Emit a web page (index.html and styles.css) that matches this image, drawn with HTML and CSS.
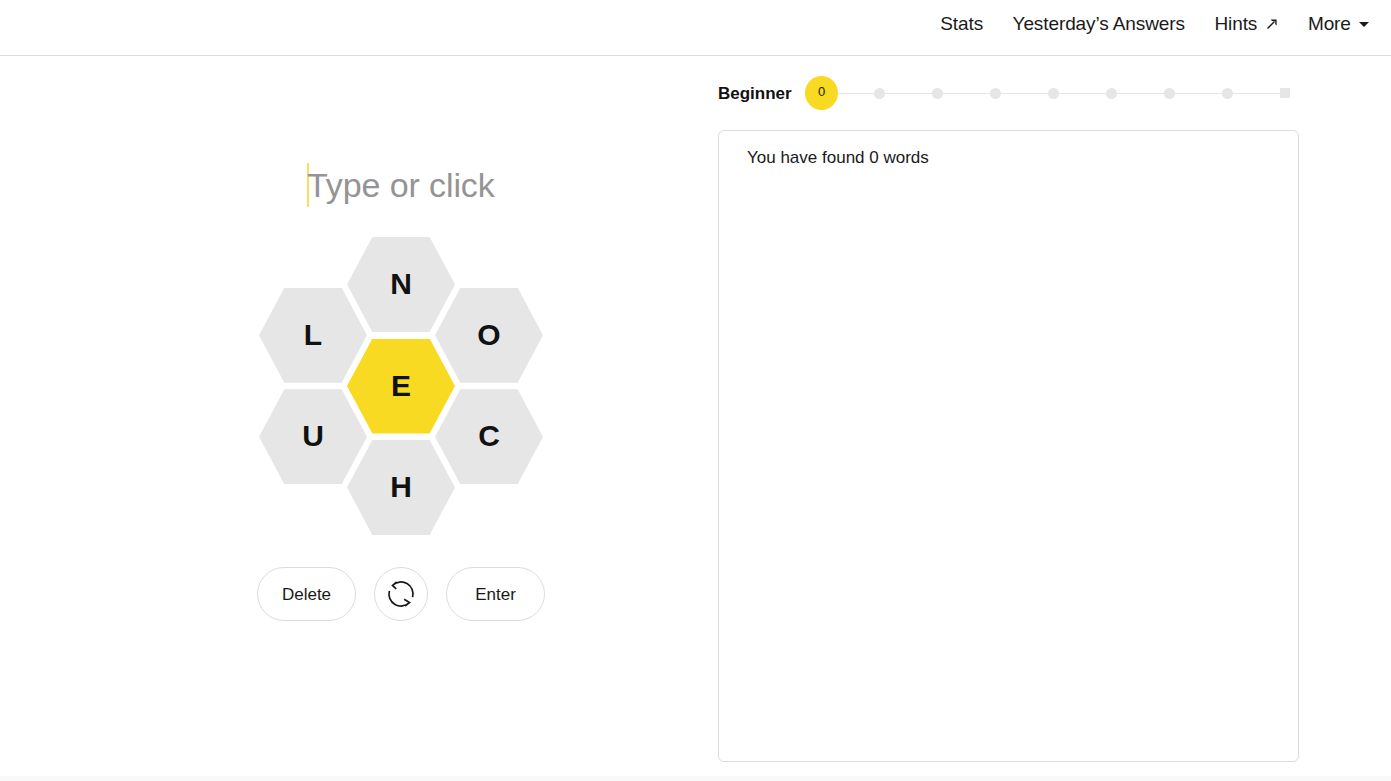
FILE: index.html
```html
<!DOCTYPE html>
<html lang="en">
<head>
    <meta charset="UTF-8">
    <meta name="viewport" content="width=device-width, initial-scale=1.0">
    <title>Spelling Bee</title>
    <link rel="stylesheet" href="styles.css">
</head>
<body>

<nav class="topbar">
    <a class="nav-link" href="#">Stats</a>
    <a class="nav-link" href="#">Yesterday’s Answers</a>
    <a class="nav-link" href="#">Hints <svg class="nav-arrow" viewBox="0 0 12 12" width="12" height="12"><path d="M1.5 10.5 8.5 3.5" fill="none" stroke="#1a1a1a" stroke-width="1.3"/><path d="M4.6 1.6H10.6V7.6L9.2 6.2V3H6Z" fill="#1a1a1a"/></svg></a>
    <a class="nav-link" href="#">More <span class="caret"></span></a>
</nav>

<main class="container">
    <section class="game">
        <div class="word-input"><span class="cursor"></span>Type or click</div>

        <div class="hive">
            <div class="hive-col">
                <div class="cell">L</div>
                <div class="cell">U</div>
            </div>
            <div class="hive-col">
                <div class="cell">N</div>
                <div class="cell center">E</div>
                <div class="cell">H</div>
            </div>
            <div class="hive-col">
                <div class="cell">O</div>
                <div class="cell">C</div>
            </div>
        </div>

        <div class="controls">
            <button class="btn">Delete</button>
            <button class="btn btn-round" aria-label="Shuffle">
                <svg class="shuffle" viewBox="0 0 26 26" width="26" height="26">
                    <path d="M4.5 4.5A12 12 0 0 1 24.6 16.1M8.7 1 4.5 4.5 8.2 7.8"/>
                    <path d="M1.4 9.9A12 12 0 0 0 21.5 21.5M16.2 18.2 21.5 21.5 17 25"/>
                </svg>
            </button>
            <button class="btn">Enter</button>
        </div>
    </section>

    <section class="results">
        <div class="progress">
            <span class="rank">Beginner</span>
            <div class="track">
                <span class="score">0</span>
                <span class="dot"></span>
                <span class="dot"></span>
                <span class="dot"></span>
                <span class="dot"></span>
                <span class="dot"></span>
                <span class="dot"></span>
                <span class="dot"></span>
                <span class="dot last"></span>
            </div>
        </div>
        <div class="word-list">You have found 0 words</div>
    </section>
</main>

</body>
</html>
```

FILE: styles.css
```css
body {
    font-family: "Liberation Sans", Arial, sans-serif;
    background-color: #f9f9f9;
    color: #1a1a1a;
    margin: 0;
}
.topbar {
    box-sizing: border-box;
    height: 56px;
    padding: 0 22px 7px 0;
    background: white;
    border-bottom: 1px solid #dcdcdc;
    display: flex;
    justify-content: flex-end;
    align-items: center;
    gap: 29.5px;
    font-size: 19px;
    letter-spacing: -0.1px;
}
.nav-link {
    color: #1a1a1a;
    text-decoration: none;
}
.nav-arrow {
    margin-left: 4px;
}
.caret {
    display: inline-block;
    vertical-align: 3px;
    margin-left: 3px;
    border-top: 5px solid #1a1a1a;
    border-left: 5px solid transparent;
    border-right: 5px solid transparent;
}
.container {
    height: 700px;
    padding: 20px 92px 0 93px;
    background: white;
    display: grid;
    grid-template-columns: 616px 581px;
    column-gap: 9px;
}
.game {
    display: flex;
    flex-direction: column;
    align-items: center;
}
.word-input {
    margin-top: 87px;
    height: 44px;
    line-height: 44px;
    width: 188px;
    font-size: 34px;
    letter-spacing: -0.1px;
    color: #949494;
    white-space: nowrap;
    display: flex;
}
.cursor {
    flex-shrink: 0;
    width: 2px;
    height: 44px;
    margin-right: -2px;
    background: #f8df5c;
}
.hive {
    margin-top: 30px;
    display: flex;
    align-items: center;
}
.hive-col {
    display: flex;
    flex-direction: column;
    gap: 6.5px;
    margin: 0 -10px;
}
.cell {
    box-sizing: border-box;
    width: 108px;
    height: 95px;
    padding-bottom: 1px;
    background: #e6e6e6;
    clip-path: polygon(23.5% 0, 76.5% 0, 100% 50%, 76.5% 100%, 23.5% 100%, 0 50%);
    display: flex;
    align-items: center;
    justify-content: center;
    font-size: 30px;
    font-weight: bold;
    color: #111;
}
.center {
    background: #f7da21;
}
.controls {
    margin-top: 32px;
    display: flex;
    gap: 18px;
}
.btn {
    width: 99px;
    height: 54px;
    background: white;
    border: 1px solid #dcdcdc;
    border-radius: 27px;
    font-family: inherit;
    font-size: 17px;
    color: #1a1a1a;
    padding: 1px 0 0;
    cursor: pointer;
}
.btn-round {
    width: 54px;
    padding: 0;
    display: flex;
    align-items: center;
    justify-content: center;
}
.shuffle {
    overflow: visible;
    fill: none;
    stroke: #1a1a1a;
    stroke-width: 1.7;
}
.progress {
    height: 34px;
    display: flex;
    align-items: center;
}
.rank {
    width: 87px;
    padding-top: 2px;
    font-size: 17px;
    font-weight: bold;
    color: #111;
}
.track {
    position: relative;
    display: flex;
    align-items: center;
    gap: 47px;
}
.track::before {
    content: "";
    position: absolute;
    left: 16px;
    right: 5px;
    top: 17px;
    height: 1px;
    background: #e6e6e6;
}
.score {
    position: relative;
    width: 33px;
    height: 34px;
    margin-right: -11px;
    line-height: 31px;
    border-radius: 50%;
    background: #f7da21;
    text-align: center;
    font-size: 13px;
}
.dot {
    position: relative;
    width: 11px;
    height: 11px;
    border-radius: 50%;
    background: #e6e6e6;
}
.last {
    width: 10px;
    height: 10px;
    border-radius: 0;
}
.word-list {
    box-sizing: border-box;
    margin-top: 20px;
    height: 632px;
    padding: 17px 28px;
    border: 1px solid #dcdcdc;
    border-radius: 6px;
    font-size: 17px;
}
```
